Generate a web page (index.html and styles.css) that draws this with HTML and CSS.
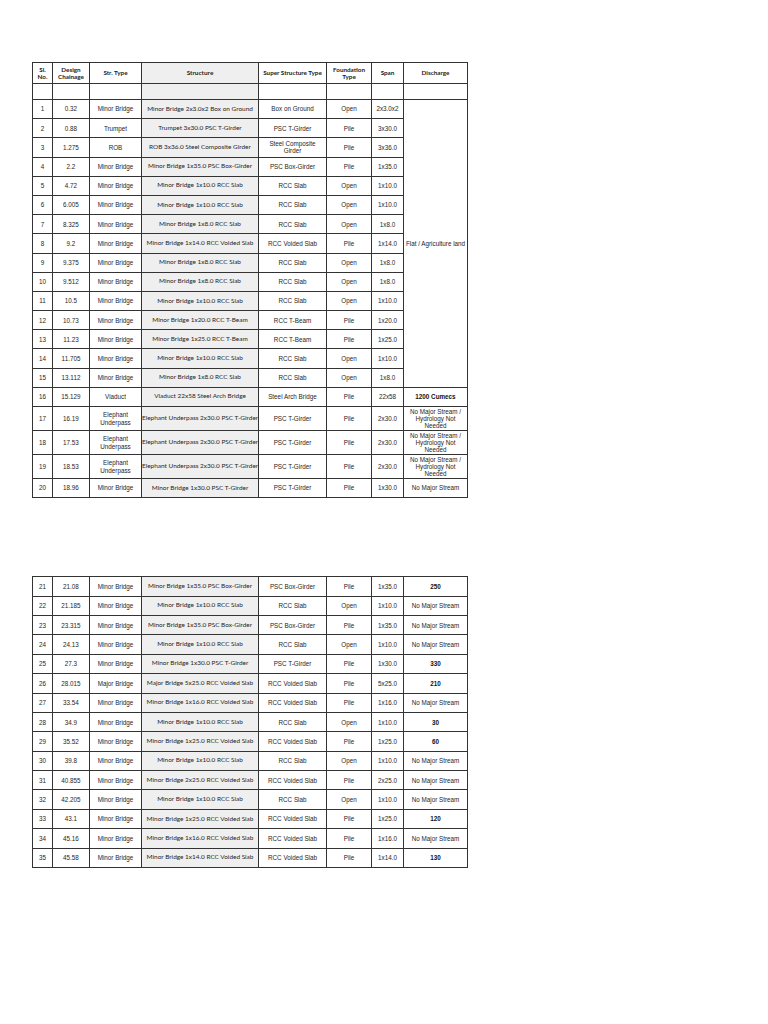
FILE: index.html
```html
<!DOCTYPE html>
<html>
<head>
<meta charset="utf-8">
<title>Structures</title>
<link rel="stylesheet" href="styles.css">
</head>
<body>
<main class="page">
<table class="grid first">
<colgroup>
<col class="c-sl"><col class="c-ch"><col class="c-type"><col class="c-str"><col class="c-sup"><col class="c-fnd"><col class="c-span"><col class="c-dis">
</colgroup>
<thead>
<tr class="head">
<th>Sl.<br>No.</th><th>Design<br>Chainage</th><th>Str. Type</th><th class="str">Structure</th><th>Super Structure Type</th><th>Foundation<br>Type</th><th>Span</th><th>Discharge</th>
</tr>
<tr class="blank"><td></td><td></td><td></td><td class="str"></td><td></td><td></td><td></td><td></td></tr>
</thead>
<tbody>
<tr><td>1</td><td>0.32</td><td>Minor Bridge</td><td class="str">Minor Bridge 2x3.0x2 Box on Ground</td><td>Box on Ground</td><td>Open</td><td>2x3.0x2</td><td rowspan="15" class="dis">Flat / Agriculture land</td></tr>
<tr><td>2</td><td>0.88</td><td>Trumpet</td><td class="str">Trumpet 3x30.0 PSC T-Girder</td><td>PSC T-Girder</td><td>Pile</td><td>3x30.0</td></tr>
<tr><td>3</td><td>1.275</td><td>ROB</td><td class="str">ROB 3x36.0 Steel Composite Girder</td><td class="two">Steel Composite<br>Girder</td><td>Pile</td><td>3x36.0</td></tr>
<tr><td>4</td><td>2.2</td><td>Minor Bridge</td><td class="str">Minor Bridge 1x35.0 PSC Box-Girder</td><td>PSC Box-Girder</td><td>Pile</td><td>1x35.0</td></tr>
<tr><td>5</td><td>4.72</td><td>Minor Bridge</td><td class="str">Minor Bridge 1x10.0 RCC Slab</td><td>RCC Slab</td><td>Open</td><td>1x10.0</td></tr>
<tr><td>6</td><td>6.005</td><td>Minor Bridge</td><td class="str">Minor Bridge 1x10.0 RCC Slab</td><td>RCC Slab</td><td>Open</td><td>1x10.0</td></tr>
<tr><td>7</td><td>8.325</td><td>Minor Bridge</td><td class="str">Minor Bridge 1x8.0 RCC Slab</td><td>RCC Slab</td><td>Open</td><td>1x8.0</td></tr>
<tr><td>8</td><td>9.2</td><td>Minor Bridge</td><td class="str">Minor Bridge 1x14.0 RCC Voided Slab</td><td>RCC Voided Slab</td><td>Pile</td><td>1x14.0</td></tr>
<tr><td>9</td><td>9.375</td><td>Minor Bridge</td><td class="str">Minor Bridge 1x8.0 RCC Slab</td><td>RCC Slab</td><td>Open</td><td>1x8.0</td></tr>
<tr><td>10</td><td>9.512</td><td>Minor Bridge</td><td class="str">Minor Bridge 1x8.0 RCC Slab</td><td>RCC Slab</td><td>Open</td><td>1x8.0</td></tr>
<tr><td>11</td><td>10.5</td><td>Minor Bridge</td><td class="str">Minor Bridge 1x10.0 RCC Slab</td><td>RCC Slab</td><td>Open</td><td>1x10.0</td></tr>
<tr><td>12</td><td>10.73</td><td>Minor Bridge</td><td class="str">Minor Bridge 1x20.0 RCC T-Beam</td><td>RCC T-Beam</td><td>Pile</td><td>1x20.0</td></tr>
<tr><td>13</td><td>11.23</td><td>Minor Bridge</td><td class="str">Minor Bridge 1x25.0 RCC T-Beam</td><td>RCC T-Beam</td><td>Pile</td><td>1x25.0</td></tr>
<tr><td>14</td><td>11.705</td><td>Minor Bridge</td><td class="str">Minor Bridge 1x10.0 RCC Slab</td><td>RCC Slab</td><td>Open</td><td>1x10.0</td></tr>
<tr><td>15</td><td>13.112</td><td>Minor Bridge</td><td class="str">Minor Bridge 1x8.0 RCC Slab</td><td>RCC Slab</td><td>Open</td><td>1x8.0</td></tr>
<tr><td>16</td><td>15.129</td><td>Viaduct</td><td class="str">Viaduct 22x58 Steel Arch Bridge</td><td>Steel Arch Bridge</td><td>Pile</td><td>22x58</td><td class="b">1200 Cumecs</td></tr>
<tr class="tall"><td>17</td><td>16.19</td><td class="two">Elephant<br>Underpass</td><td class="str">Elephant Underpass 2x30.0 PSC T-Girder</td><td>PSC T-Girder</td><td>Pile</td><td>2x30.0</td><td class="three">No Major Stream /<br>Hydrology Not<br>Needed</td></tr>
<tr class="tall"><td>18</td><td>17.53</td><td class="two">Elephant<br>Underpass</td><td class="str">Elephant Underpass 2x30.0 PSC T-Girder</td><td>PSC T-Girder</td><td>Pile</td><td>2x30.0</td><td class="three">No Major Stream /<br>Hydrology Not<br>Needed</td></tr>
<tr class="tall"><td>19</td><td>18.53</td><td class="two">Elephant<br>Underpass</td><td class="str">Elephant Underpass 2x30.0 PSC T-Girder</td><td>PSC T-Girder</td><td>Pile</td><td>2x30.0</td><td class="three">No Major Stream /<br>Hydrology Not<br>Needed</td></tr>
<tr><td>20</td><td>18.96</td><td>Minor Bridge</td><td class="str">Minor Bridge 1x30.0 PSC T-Girder</td><td>PSC T-Girder</td><td>Pile</td><td>1x30.0</td><td>No Major Stream</td></tr>
</tbody>
</table>

<table class="grid second">
<colgroup>
<col class="c-sl"><col class="c-ch"><col class="c-type"><col class="c-str"><col class="c-sup"><col class="c-fnd"><col class="c-span"><col class="c-dis">
</colgroup>
<tbody>
<tr><td>21</td><td>21.08</td><td>Minor Bridge</td><td class="str">Minor Bridge 1x35.0 PSC Box-Girder</td><td>PSC Box-Girder</td><td>Pile</td><td>1x35.0</td><td class="b">250</td></tr>
<tr><td>22</td><td>21.185</td><td>Minor Bridge</td><td class="str">Minor Bridge 1x10.0 RCC Slab</td><td>RCC Slab</td><td>Open</td><td>1x10.0</td><td>No Major Stream</td></tr>
<tr><td>23</td><td>23.315</td><td>Minor Bridge</td><td class="str">Minor Bridge 1x35.0 PSC Box-Girder</td><td>PSC Box-Girder</td><td>Pile</td><td>1x35.0</td><td>No Major Stream</td></tr>
<tr><td>24</td><td>24.13</td><td>Minor Bridge</td><td class="str">Minor Bridge 1x10.0 RCC Slab</td><td>RCC Slab</td><td>Open</td><td>1x10.0</td><td>No Major Stream</td></tr>
<tr><td>25</td><td>27.3</td><td>Minor Bridge</td><td class="str">Minor Bridge 1x30.0 PSC T-Girder</td><td>PSC T-Girder</td><td>Pile</td><td>1x30.0</td><td class="b">330</td></tr>
<tr><td>26</td><td>28.015</td><td>Major Bridge</td><td class="str">Major Bridge 5x25.0 RCC Voided Slab</td><td>RCC Voided Slab</td><td>Pile</td><td>5x25.0</td><td class="b">210</td></tr>
<tr><td>27</td><td>33.54</td><td>Minor Bridge</td><td class="str">Minor Bridge 1x16.0 RCC Voided Slab</td><td>RCC Voided Slab</td><td>Pile</td><td>1x16.0</td><td>No Major Stream</td></tr>
<tr><td>28</td><td>34.9</td><td>Minor Bridge</td><td class="str">Minor Bridge 1x10.0 RCC Slab</td><td>RCC Slab</td><td>Open</td><td>1x10.0</td><td class="b">30</td></tr>
<tr><td>29</td><td>35.52</td><td>Minor Bridge</td><td class="str">Minor Bridge 1x25.0 RCC Voided Slab</td><td>RCC Voided Slab</td><td>Pile</td><td>1x25.0</td><td class="b">60</td></tr>
<tr><td>30</td><td>39.8</td><td>Minor Bridge</td><td class="str">Minor Bridge 1x10.0 RCC Slab</td><td>RCC Slab</td><td>Open</td><td>1x10.0</td><td>No Major Stream</td></tr>
<tr><td>31</td><td>40.855</td><td>Minor Bridge</td><td class="str">Minor Bridge 2x25.0 RCC Voided Slab</td><td>RCC Voided Slab</td><td>Pile</td><td>2x25.0</td><td>No Major Stream</td></tr>
<tr><td>32</td><td>42.205</td><td>Minor Bridge</td><td class="str">Minor Bridge 1x10.0 RCC Slab</td><td>RCC Slab</td><td>Open</td><td>1x10.0</td><td>No Major Stream</td></tr>
<tr><td>33</td><td>43.1</td><td>Minor Bridge</td><td class="str">Minor Bridge 1x25.0 RCC Voided Slab</td><td>RCC Voided Slab</td><td>Pile</td><td>1x25.0</td><td class="b">120</td></tr>
<tr><td>34</td><td>45.16</td><td>Minor Bridge</td><td class="str">Minor Bridge 1x16.0 RCC Voided Slab</td><td>RCC Voided Slab</td><td>Pile</td><td>1x16.0</td><td>No Major Stream</td></tr>
<tr><td>35</td><td>45.58</td><td>Minor Bridge</td><td class="str">Minor Bridge 1x14.0 RCC Voided Slab</td><td>RCC Voided Slab</td><td>Pile</td><td>1x14.0</td><td class="b">130</td></tr>
</tbody>
</table>
</main>
</body>
</html>
```

FILE: styles.css
```css
html, body {
  margin: 0;
  padding: 0;
  background: #ffffff;
}

.page {
  padding: 62px 0 0 32px;
  display: flex;
  flex-direction: column;
  align-items: flex-start;
  gap: 78px;
}

.grid {
  border-collapse: collapse;
  table-layout: fixed;
  width: 435px;
  border: 1.5px solid #2a2a2a;
  font-family: "Liberation Sans", Arial, sans-serif;
  font-size: 6.3px;
  line-height: 1.15;
  color: #262626;
}

.c-sl { width: 20px; }
.c-ch { width: 37px; }
.c-type { width: 52px; }
.c-str { width: 117px; }
.c-sup { width: 68px; }
.c-fnd { width: 45px; }
.c-span { width: 32px; }
.c-dis { width: 64px; }

.grid td,
.grid th {
  border: 1px solid #333333;
  padding: 0 1px;
  text-align: center;
  vertical-align: middle;
  white-space: nowrap;
  overflow: visible;
}

.grid th {
  font-family: Lato, "Open Sans", sans-serif;
  font-weight: 700;
  font-size: 6.3px;
  color: #1a1a1a;
  line-height: 1.15;
}

.grid .str {
  background: #efefef;
  font-family: Lato, "Open Sans", sans-serif;
  font-size: 6.45px;
  color: #262626;
  padding: 0 0 1.5px 0;
}

.grid .b {
  font-weight: 700;
  color: #111111;
}

.grid .dis {
  color: #222222;
}

.head { height: 21px; }
.blank { height: 16px; }
.first tbody tr { height: 19.2px; }
.first tbody tr.tall { height: 24px; }
.second tbody tr { height: 19.4px; }

.grid .two,
.grid .three {
  line-height: 1.15;
}
```
